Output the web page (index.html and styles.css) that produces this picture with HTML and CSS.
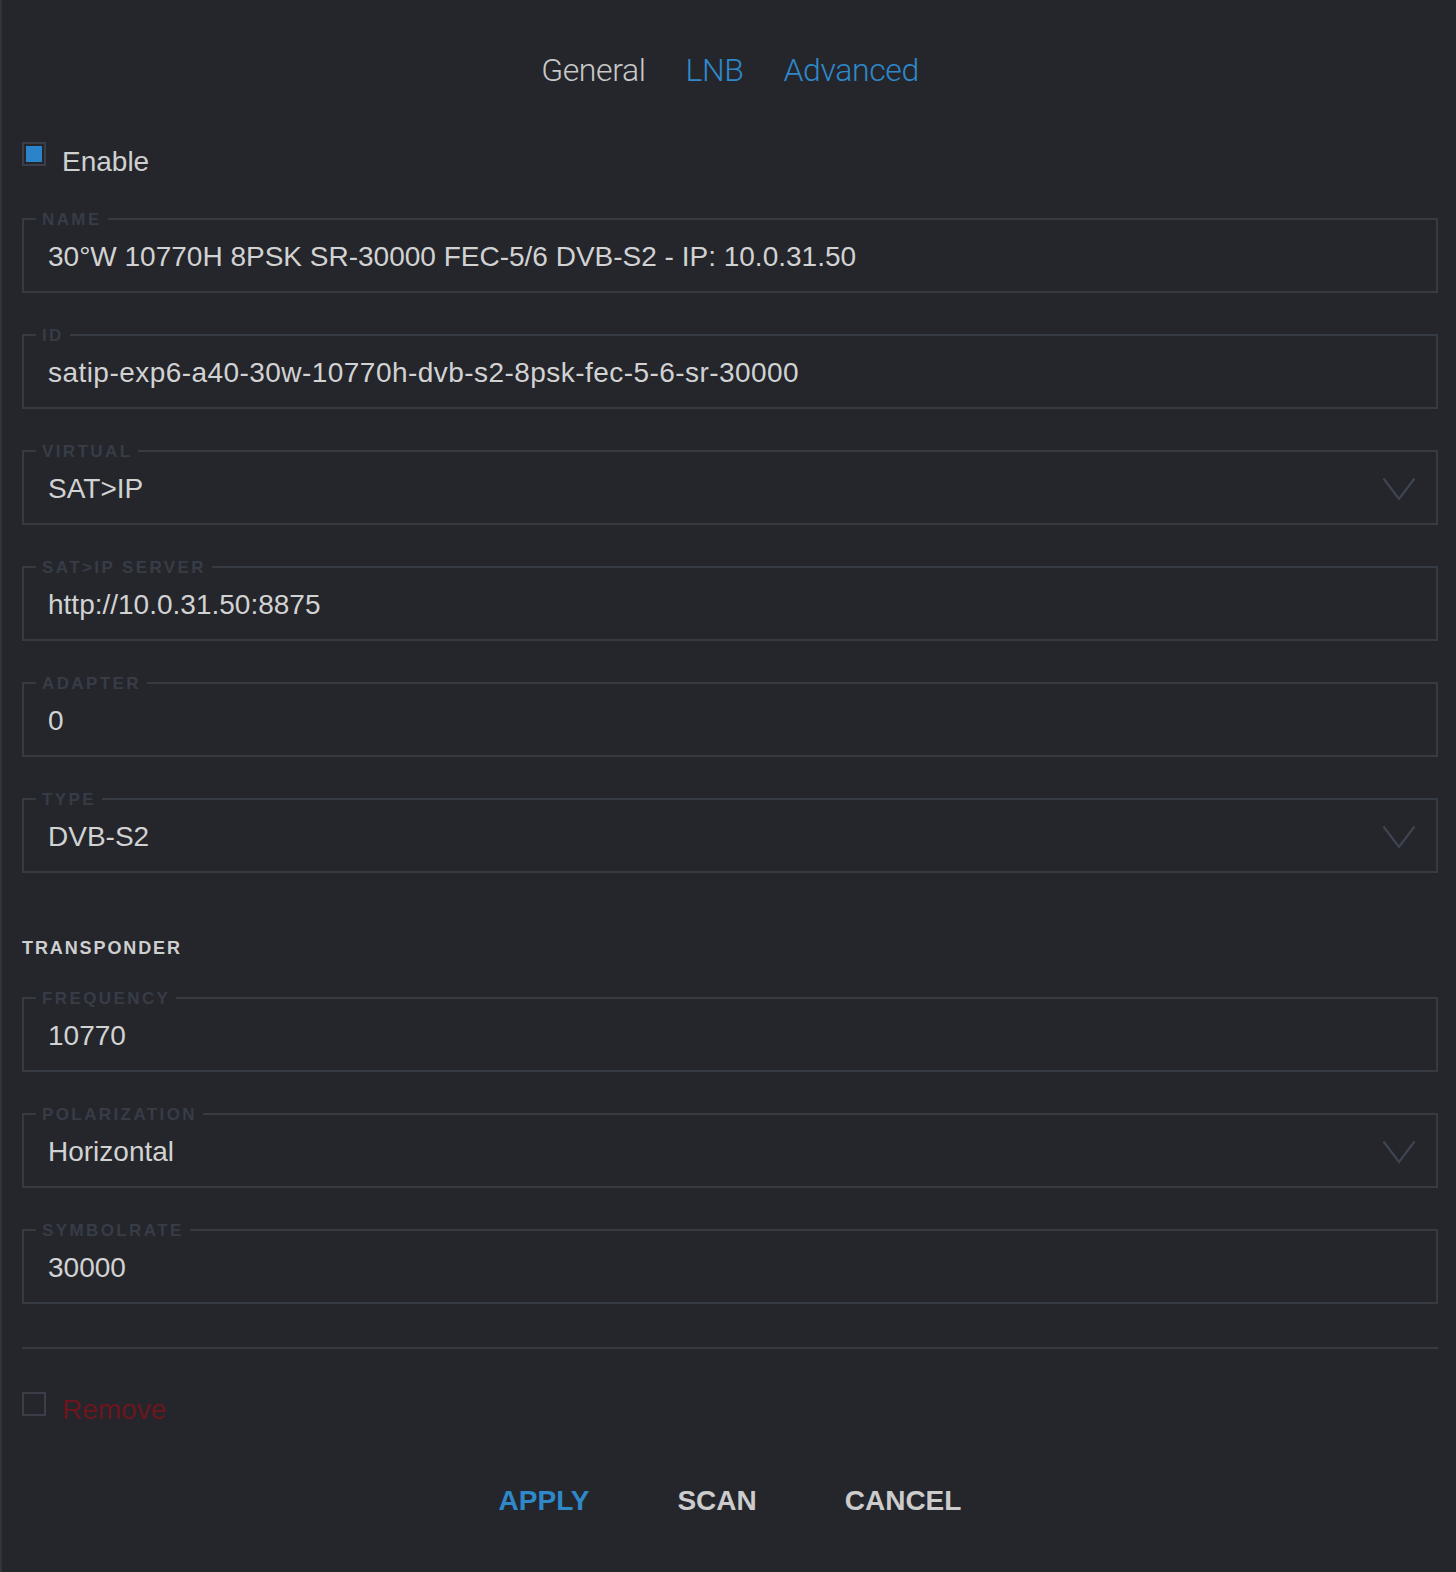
FILE: index.html
```html
<!DOCTYPE html>
<html lang="en">
<head>
<meta charset="utf-8">
<title>SAT>IP Network</title>
<link rel="stylesheet" href="styles.css">
</head>
<body>
<div class="dialog">
  <nav class="tabs">
    <span class="tab tab-active">General</span>
    <span class="tab">LNB</span>
    <span class="tab">Advanced</span>
  </nav>

  <div class="check-row check-row-enable">
    <span class="checkbox checkbox-on"></span>
    <span class="check-label">Enable</span>
  </div>

  <div class="field">
    <span class="field-label">Name</span>
    <span class="field-value">30°W 10770H 8PSK SR-30000 FEC-5/6 DVB-S2 - IP: 10.0.31.50</span>
  </div>
  <div class="field">
    <span class="field-label">ID</span>
    <span class="field-value field-value-wide">satip-exp6-a40-30w-10770h-dvb-s2-8psk-fec-5-6-sr-30000</span>
  </div>
  <div class="field">
    <span class="field-label">Virtual</span>
    <span class="field-value">SAT&gt;IP</span>
    <svg class="chevron" width="34" height="24" viewBox="0 0 34 24"><polyline points="1.5,1.5 17,22 32.5,1.5" fill="none" stroke="#3e4451" stroke-width="2.2"/></svg>
  </div>
  <div class="field">
    <span class="field-label">SAT&gt;IP Server</span>
    <span class="field-value">http://10.0.31.50:8875</span>
  </div>
  <div class="field">
    <span class="field-label">Adapter</span>
    <span class="field-value">0</span>
  </div>
  <div class="field field-last">
    <span class="field-label">Type</span>
    <span class="field-value">DVB-S2</span>
    <svg class="chevron" width="34" height="24" viewBox="0 0 34 24"><polyline points="1.5,1.5 17,22 32.5,1.5" fill="none" stroke="#3e4451" stroke-width="2.2"/></svg>
  </div>

  <h3 class="section-title">Transponder</h3>

  <div class="field">
    <span class="field-label">Frequency</span>
    <span class="field-value">10770</span>
  </div>
  <div class="field">
    <span class="field-label">Polarization</span>
    <span class="field-value">Horizontal</span>
    <svg class="chevron" width="34" height="24" viewBox="0 0 34 24"><polyline points="1.5,1.5 17,22 32.5,1.5" fill="none" stroke="#3e4451" stroke-width="2.2"/></svg>
  </div>
  <div class="field field-last">
    <span class="field-label">Symbolrate</span>
    <span class="field-value">30000</span>
  </div>

  <hr class="divider">

  <div class="check-row check-row-remove">
    <span class="checkbox"></span>
    <span class="check-label check-label-danger">Remove</span>
  </div>

  <div class="actions">
    <span class="btn btn-primary">APPLY</span>
    <span class="btn">SCAN</span>
    <span class="btn">CANCEL</span>
  </div>
</div>
</body>
</html>
```

FILE: styles.css
```css
html, body {
  margin: 0;
  padding: 0;
  background: #24262c;
}

body {
  font-family: "Liberation Sans", Arial, sans-serif;
  color: #d2d2d2;
}

.dialog {
  min-height: 1572px;
  box-sizing: border-box;
  border-left: 2px solid #2f343d;
  padding: 50px 18px 0 20px;
}

.tabs {
  display: flex;
  justify-content: center;
  gap: 40px;
  height: 40px;
  line-height: 40px;
}

.tab {
  font-family: Roboto, "Liberation Sans", sans-serif;
  font-weight: 300;
  font-size: 32px;
  color: #2f88c8;
  letter-spacing: -0.4px;
}

.tab-active {
  color: #c9c9c9;
}

.check-row {
  display: flex;
  align-items: flex-start;
  height: 34px;
}

.check-row-enable {
  margin-top: 52px;
  margin-bottom: 42px;
}

.check-row-remove {
  margin-top: 43px;
}

.checkbox {
  box-sizing: border-box;
  width: 24px;
  height: 24px;
  border: 2px solid #393e48;
  padding: 2px;
  flex: none;
}

.checkbox-on::before {
  content: "";
  display: block;
  width: 16px;
  height: 16px;
  background: #2b84c9;
}

.check-label {
  margin-left: 16px;
  margin-top: 6px;
  font-size: 28px;
  line-height: 28px;
  color: #d0d0d0;
}

.check-label-danger {
  color: #6a161c;
  margin-top: 4px;
}

.field {
  position: relative;
  box-sizing: border-box;
  height: 75px;
  border: 2px solid #353a43;
  display: flex;
  align-items: center;
  padding: 2px 20px 0 24px;
  margin-bottom: 41px;
}

.field-last {
  margin-bottom: 0;
}

.field-label {
  position: absolute;
  top: -9px;
  left: 12px;
  padding: 0 6px;
  background: #24262c;
  font-size: 17px;
  line-height: 18px;
  font-weight: bold;
  letter-spacing: 2.4px;
  text-transform: uppercase;
  color: #373c46;
}

.field-value {
  font-size: 28px;
  line-height: 32px;
  color: #d2d2d2;
  white-space: nowrap;
}

.field-value-wide {
  letter-spacing: 0.45px;
}

.chevron {
  margin-left: auto;
  flex: none;
}

.section-title {
  margin: 66px 0 40px 0;
  font-size: 18px;
  line-height: 18px;
  font-weight: bold;
  letter-spacing: 1.9px;
  text-transform: uppercase;
  color: #cfcfcf;
}

.divider {
  margin: 43px 0 0 0;
  border: 0;
  height: 2px;
  background: #353a43;
}

.actions {
  display: flex;
  justify-content: center;
  gap: 88px;
  margin-top: 61px;
  line-height: 28px;
}

.btn {
  font-size: 28px;
  font-weight: bold;
  color: #cccccc;
}

.btn-primary {
  color: #2f88c8;
}
```
